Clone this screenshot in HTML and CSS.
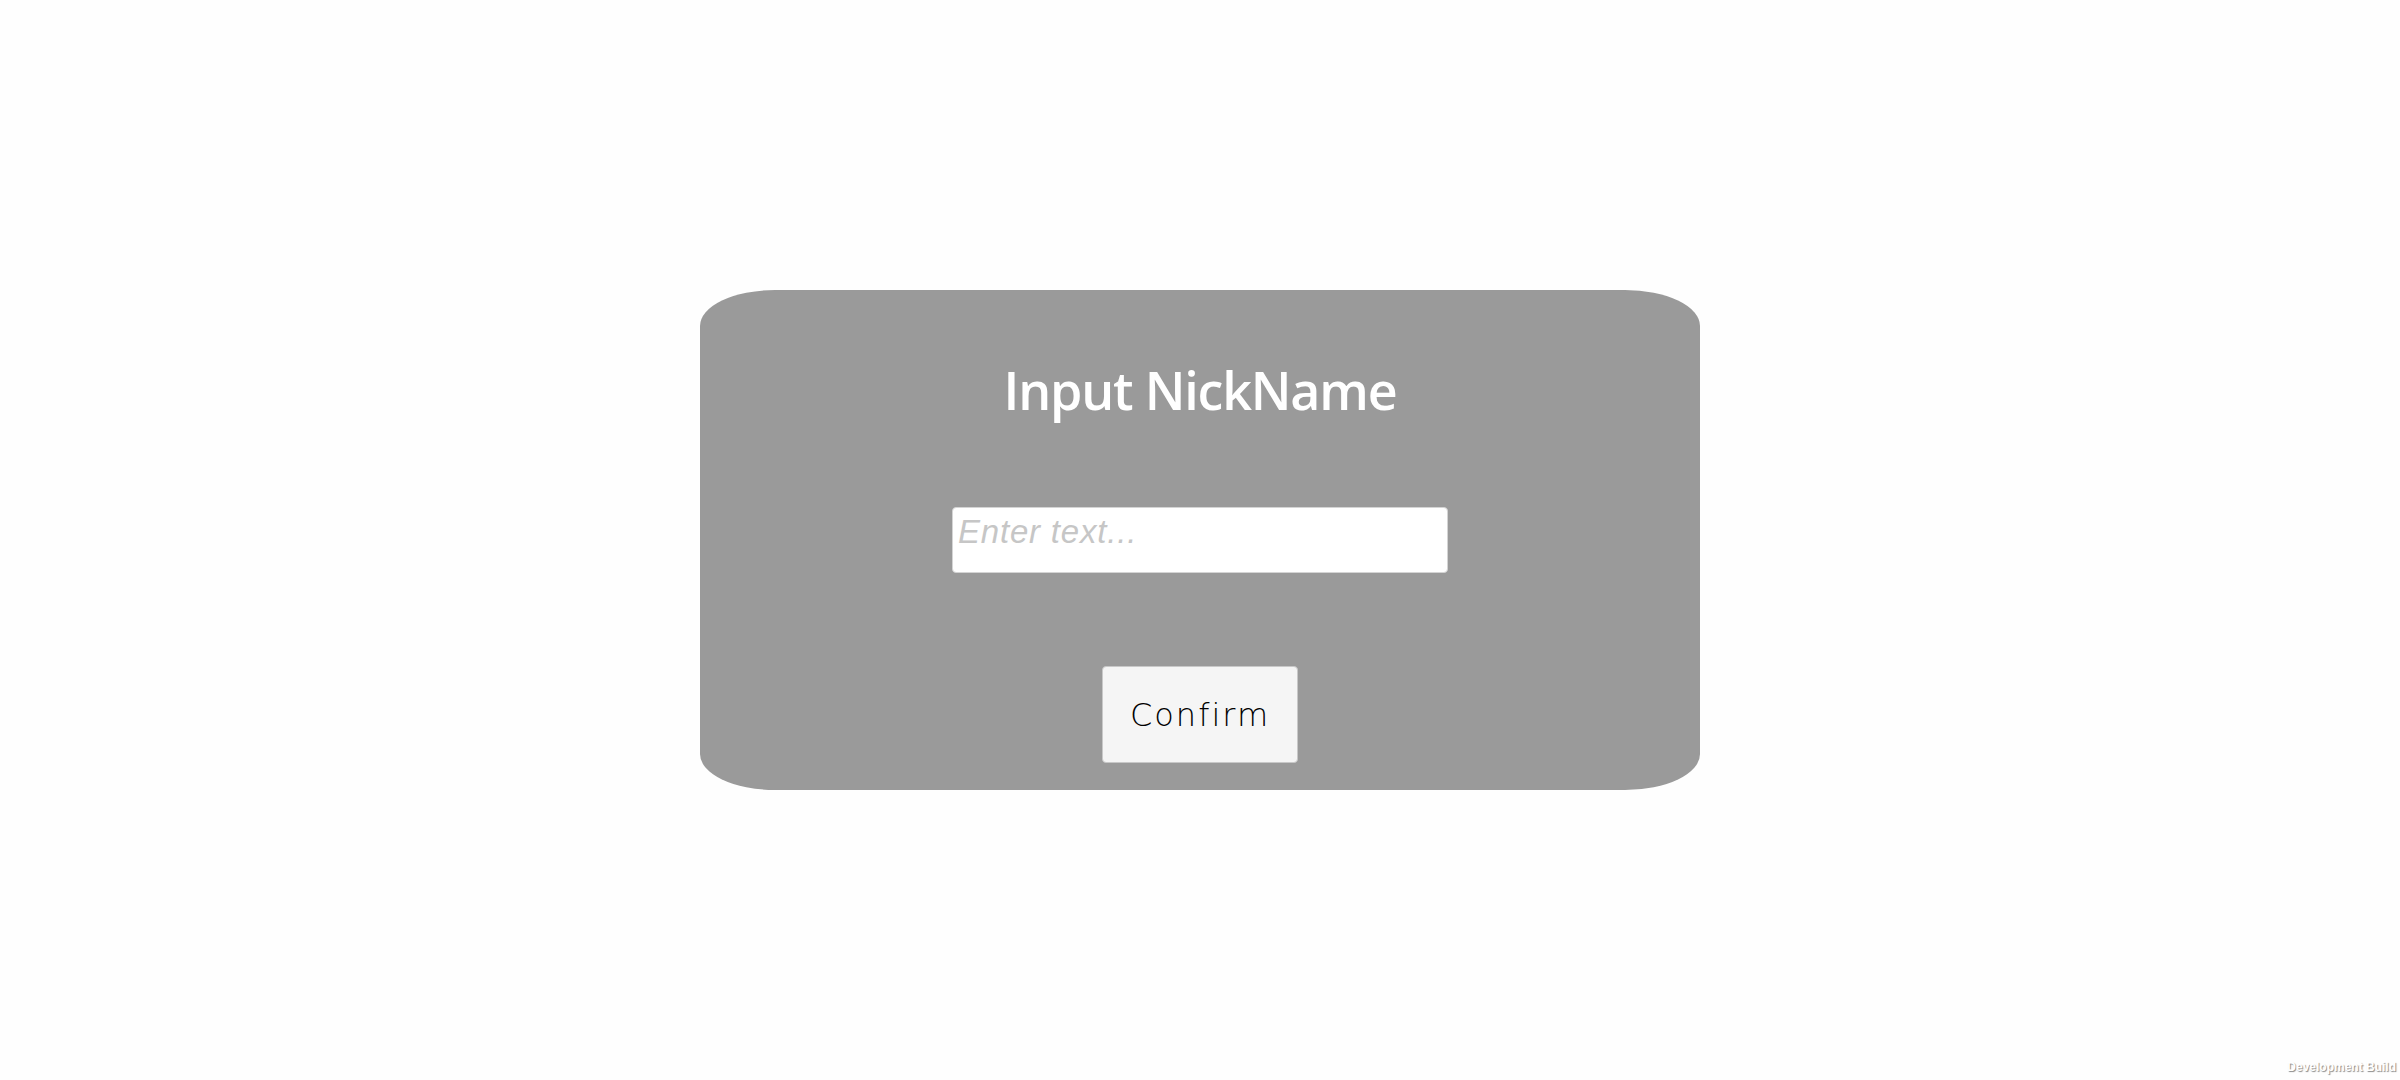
FILE: index.html
```html
<!DOCTYPE html>
<html lang="en">
<head>
<meta charset="utf-8">
<title>Input NickName</title>
<link rel="stylesheet" href="styles.css">
</head>
<body>
<main class="screen">
  <section class="panel">
    <h1 class="panel-title">Input NickName</h1>
    <input class="nick-input" type="text" placeholder="Enter text...">
    <button class="confirm-btn" type="button">Confirm</button>
  </section>
  <div class="dev-build">Development Build</div>
</main>
</body>
</html>
```
FILE: styles.css
```css
html, body {
  margin: 0;
  padding: 0;
  background: #fefefe;
}

.screen {
  width: 2400px;
  height: 1080px;
  display: flex;
  align-items: center;
  justify-content: center;
  position: relative;
}

.panel {
  width: 1000px;
  height: 500px;
  box-sizing: border-box;
  background: #9a9a9a;
  border-radius: 75px / 36px;
  display: flex;
  flex-direction: column;
  align-items: center;
  padding-top: 70px;
}

.panel-title {
  margin: 0;
  font-family: "Open Sans", "Noto Sans", sans-serif;
  font-weight: 600;
  font-size: 52px;
  line-height: 60px;
  letter-spacing: -1.2px;
  color: #ffffff;
}

.nick-input {
  margin-top: 87px;
  width: 496px;
  height: 66px;
  box-sizing: border-box;
  border: 1px solid #d4d4d4;
  border-radius: 4px;
  background: #ffffff;
  padding: 6px 6px 22px 5px;
  font-family: "Liberation Sans", Arial, sans-serif;
  font-style: italic;
  font-size: 33px;
  line-height: 36px;
  letter-spacing: 0.8px;
  color: #323232;
  outline: none;
}

.nick-input::placeholder {
  color: #c6c6c6;
  opacity: 1;
}

.confirm-btn {
  margin-top: 93px;
  width: 196px;
  height: 97px;
  box-sizing: border-box;
  border: 1px solid #c8c8c8;
  border-radius: 4px;
  background: #f5f5f5;
  padding: 0;
  font-family: "DejaVu Sans", sans-serif;
  font-weight: 300;
  font-size: 32px;
  letter-spacing: 2px;
  color: #000000;
  cursor: pointer;
}

.dev-build {
  position: absolute;
  right: 4px;
  bottom: 6px;
  font-family: "Liberation Sans", Arial, sans-serif;
  font-weight: bold;
  font-size: 12px;
  color: #ffffff;
  text-shadow: 1px 1px 1px #8a8a8a;
}
```
